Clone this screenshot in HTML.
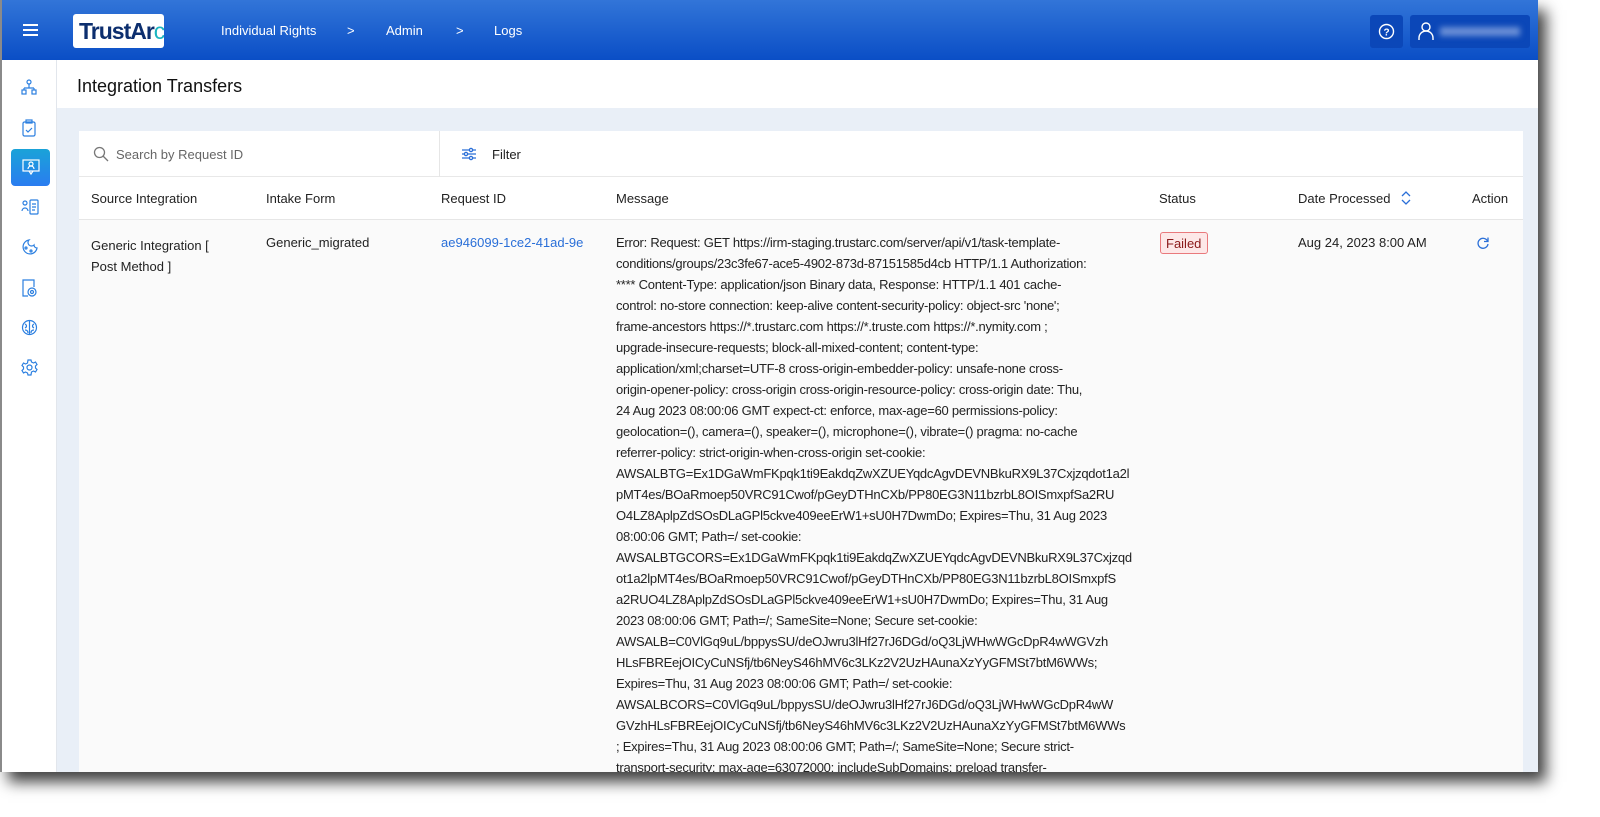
<!DOCTYPE html>
<html><head><meta charset="utf-8"><style>
*{box-sizing:border-box;margin:0;padding:0}
body{width:1600px;height:817px;background:#fff;font-family:"Liberation Sans",sans-serif;position:relative;overflow:hidden;color:#222}
.win{position:absolute;left:0;top:0;width:1538px;height:772px;background:#e9eff7;box-shadow:8px 10px 14px rgba(0,0,0,.75);overflow:hidden;border-left:2px solid #8a8a8a}
.hdr{position:absolute;left:0;top:0;width:100%;height:60px;background:linear-gradient(#3275d8,#0a4ec6);color:#fff}
.logo{position:absolute;left:71px;top:14px;width:91px;height:34px;background:#fff;border-radius:3px;font-size:23px;font-weight:bold;color:#0c2e6e;padding:4px 0 0 6px;letter-spacing:-1px;white-space:nowrap;overflow:hidden}
.logo span{color:#1bb5c0;font-weight:normal}
.crumb{position:absolute;top:23px;font-size:13px}
.side{position:absolute;left:0;top:60px;width:55px;height:712px;background:#fff;border-right:1px solid #e2e6ec}
.side svg{position:absolute;left:19px}
.title{position:absolute;left:55px;top:60px;right:0;height:48px;background:#fff;font-size:18px;padding:16px 0 0 20px;color:#111}
.card{position:absolute;left:77px;top:131px;width:1444px;height:660px;background:#fafafa}
.sr{position:absolute;left:0;top:0;width:100%;height:46px;background:#fff;border-bottom:1px solid #e8e8e8}
.th{position:absolute;left:0;top:46px;width:100%;height:43px;background:#fff;border-bottom:1px solid #e6e6e6}
.t{position:absolute;font-size:13px;white-space:nowrap}
.msg{position:absolute;left:537px;top:101px;font-size:13px;line-height:21px;white-space:nowrap;letter-spacing:-.25px;color:#222}
</style></head><body>
<div class="win">
<div class="hdr">
 <div style="position:absolute;left:21px;top:24px;width:15px;height:2px;background:#fff;box-shadow:0 5px 0 #fff,0 10px 0 #fff"></div>
 <div class="logo">TrustAr<span>c</span></div>
 <div class="crumb" style="left:219px">Individual Rights</div>
 <div class="crumb" style="left:345px">&gt;</div>
 <div class="crumb" style="left:384px">Admin</div>
 <div class="crumb" style="left:454px">&gt;</div>
 <div class="crumb" style="left:492px">Logs</div>
 <div style="position:absolute;left:1368px;top:15px;width:33px;height:33px;background:#0b47b8;border-radius:3px"><svg width="33" height="33"><circle cx="16.5" cy="16.5" r="7" fill="none" stroke="#fff" stroke-width="1.4"/><text x="16.5" y="20.5" font-size="10" font-weight="bold" fill="#fff" text-anchor="middle" font-family="Liberation Sans">?</text></svg></div>
 <div style="position:absolute;left:1408px;top:15px;width:120px;height:33px;background:#0b47b8;border-radius:3px"><svg width="33" height="33"><circle cx="16" cy="12" r="4" fill="none" stroke="#fff" stroke-width="1.4"/><path d="M9 25v-2a7 7 0 0 1 14 0v2" fill="none" stroke="#fff" stroke-width="1.4"/></svg><div style="position:absolute;left:30px;top:12px;width:80px;height:9px;background:#6a8fd6;filter:blur(3px)"></div></div>
</div>
<div class="side">
 <svg style="top:19px" width="16" height="16" fill="none" stroke="#2b7fe0" stroke-width="1.2"><circle cx="8" cy="3" r="2"/><path d="M8 5v4M3 9h10M3 9v2M13 9v2"/><rect x="1" y="11" width="4" height="4"/><rect x="11" y="11" width="4" height="4"/></svg>
 <svg style="top:59px" width="16" height="18" fill="none" stroke="#2b7fe0" stroke-width="1.2"><rect x="2" y="3" width="12" height="14" rx="1.5"/><rect x="5" y="1" width="6" height="3"/><path d="M5 11l2 2 4-4"/></svg>
 <div style="position:absolute;left:9px;top:89px;width:39px;height:37px;border-radius:4px;background:linear-gradient(#1aa3d8,#2a7cf0)"><svg style="position:absolute;left:11px;top:10px" width="18" height="17" fill="none" stroke="#fff" stroke-width="1.2"><rect x="1" y="1" width="16" height="11"/><circle cx="9" cy="5" r="2"/><path d="M6 10a3 3 0 0 1 6 0M7 12l2 3 2-3"/></svg></div>
 <svg style="top:139px" width="18" height="16" fill="none" stroke="#2b7fe0" stroke-width="1.2"><circle cx="4" cy="4" r="2"/><path d="M1 12a3 3 0 0 1 6 0"/><rect x="9" y="1" width="8" height="14" rx="1"/><path d="M11 5h4M11 8h4M11 11h3"/></svg>
 <svg style="top:179px" width="17" height="17" fill="none" stroke="#2b7fe0" stroke-width="1.2"><path d="M8 1a7 7 0 1 0 8 8 3 3 0 0 1-3-3 3 3 0 0 1-5-5z"/><circle cx="5" cy="9" r="1"/><circle cx="10" cy="12" r="1"/></svg>
 <svg style="top:219px" width="16" height="18" fill="none" stroke="#2b7fe0" stroke-width="1.2"><path d="M13 8V1H2v16h5"/><circle cx="11" cy="13" r="4"/><circle cx="11" cy="13" r="1.5"/></svg>
 <svg style="top:259px" width="17" height="17" fill="none" stroke="#2b7fe0" stroke-width="1.2"><circle cx="8.5" cy="8.5" r="7"/><path d="M8.5 2v13M4 5c2 1 2 3 0 4M13 5c-2 1-2 3 0 4M4 11c2 0 3 1 3 3M13 11c-2 0-3 1-3 3"/></svg>
 <svg style="top:299px" width="17" height="17" fill="none" stroke="#2b7fe0" stroke-width="1.2"><circle cx="8.5" cy="8.5" r="2.5"/><path d="M7 1h3l.5 2 2 1 2-1 1.5 2.5-1.5 1.5v2l1.5 1.5-1.5 2.5-2-1-2 1L10 16H7l-.5-2-2-1-2 1L1 11.5 2.5 10V8L1 6.5 2.5 4l2 1 2-1z"/></svg>
</div>
<div class="title">Integration Transfers</div>
<div class="card">
 <div class="sr">
  <svg style="position:absolute;left:14px;top:15px" width="16" height="16" fill="none" stroke="#777" stroke-width="1.3"><circle cx="6.5" cy="6.5" r="5"/><path d="M10 10l5 5"/></svg>
  <div class="t" style="left:37px;top:16px;color:#666">Search by Request ID</div>
  <div style="position:absolute;left:360px;top:0;width:1px;height:46px;background:#e6e6e6"></div>
  <svg style="position:absolute;left:382px;top:16px" width="16" height="14" fill="none" stroke="#2a6fd8" stroke-width="1.3"><path d="M1 3h14M1 7h14M1 11h14"/><circle cx="10" cy="3" r="1.6" fill="#fff"/><circle cx="5" cy="7" r="1.6" fill="#fff"/><circle cx="10" cy="11" r="1.6" fill="#fff"/></svg>
  <div class="t" style="left:413px;top:16px">Filter</div>
 </div>
 <div class="th">
  <div class="t" style="left:12px;top:14px">Source Integration</div>
  <div class="t" style="left:187px;top:14px">Intake Form</div>
  <div class="t" style="left:362px;top:14px">Request ID</div>
  <div class="t" style="left:537px;top:14px">Message</div>
  <div class="t" style="left:1080px;top:14px">Status</div>
  <div class="t" style="left:1219px;top:14px">Date Processed</div>
  <svg style="position:absolute;left:1321px;top:12px" width="12" height="18" fill="none" stroke="#2a6fd8" stroke-width="1.3"><path d="M2 7l4-4 4 4M2 11l4 4 4-4"/></svg>
  <div class="t" style="left:1393px;top:14px">Action</div>
 </div>
 <div class="t" style="left:12px;top:104px;line-height:21px">Generic Integration [<br>Post Method ]</div>
 <div class="t" style="left:187px;top:104px">Generic_migrated</div>
 <div class="t" style="left:362px;top:104px;color:#2a6fd8">ae946099-1ce2-41ad-9e</div>
 <div style="position:absolute;left:1081px;top:101px;width:48px;height:22px;border:1px solid #e9797c;background:#fde8e8;border-radius:3px;color:#8a1a1a;font-size:13px;padding:3px 0 0 5px">Failed</div>
 <div class="t" style="left:1219px;top:104px">Aug 24, 2023 8:00 AM</div>
 <svg style="position:absolute;left:1397px;top:105px" width="14" height="14" fill="none" stroke="#2a6fd8" stroke-width="1.3"><path d="M11.5 5A5 5 0 1 0 12 8"/><path d="M12 1.5v4H8"/></svg>
 <div class="msg">Error: Request: GET https://irm-staging.trustarc.com/server/api/v1/task-template-<br>conditions/groups/23c3fe67-ace5-4902-873d-87151585d4cb HTTP/1.1 Authorization:<br>**** Content-Type: application/json Binary data, Response: HTTP/1.1 401 cache-<br>control: no-store connection: keep-alive content-security-policy: object-src 'none';<br>frame-ancestors https://*.trustarc.com https://*.truste.com https://*.nymity.com ;<br>upgrade-insecure-requests; block-all-mixed-content; content-type:<br>application/xml;charset=UTF-8 cross-origin-embedder-policy: unsafe-none cross-<br>origin-opener-policy: cross-origin cross-origin-resource-policy: cross-origin date: Thu,<br>24 Aug 2023 08:00:06 GMT expect-ct: enforce, max-age=60 permissions-policy:<br>geolocation=(), camera=(), speaker=(), microphone=(), vibrate=() pragma: no-cache<br>referrer-policy: strict-origin-when-cross-origin set-cookie:<br>AWSALBTG=Ex1DGaWmFKpqk1ti9EakdqZwXZUEYqdcAgvDEVNBkuRX9L37Cxjzqdot1a2l<br>pMT4es/BOaRmoep50VRC91Cwof/pGeyDTHnCXb/PP80EG3N11bzrbL8OISmxpfSa2RU<br>O4LZ8AplpZdSOsDLaGPl5ckve409eeErW1+sU0H7DwmDo; Expires=Thu, 31 Aug 2023<br>08:00:06 GMT; Path=/ set-cookie:<br>AWSALBTGCORS=Ex1DGaWmFKpqk1ti9EakdqZwXZUEYqdcAgvDEVNBkuRX9L37Cxjzqd<br>ot1a2lpMT4es/BOaRmoep50VRC91Cwof/pGeyDTHnCXb/PP80EG3N11bzrbL8OISmxpfS<br>a2RUO4LZ8AplpZdSOsDLaGPl5ckve409eeErW1+sU0H7DwmDo; Expires=Thu, 31 Aug<br>2023 08:00:06 GMT; Path=/; SameSite=None; Secure set-cookie:<br>AWSALB=C0VlGq9uL/bppysSU/deOJwru3lHf27rJ6DGd/oQ3LjWHwWGcDpR4wWGVzh<br>HLsFBREejOICyCuNSfj/tb6NeyS46hMV6c3LKz2V2UzHAunaXzYyGFMSt7btM6WWs;<br>Expires=Thu, 31 Aug 2023 08:00:06 GMT; Path=/ set-cookie:<br>AWSALBCORS=C0VlGq9uL/bppysSU/deOJwru3lHf27rJ6DGd/oQ3LjWHwWGcDpR4wW<br>GVzhHLsFBREejOICyCuNSfj/tb6NeyS46hMV6c3LKz2V2UzHAunaXzYyGFMSt7btM6WWs<br>; Expires=Thu, 31 Aug 2023 08:00:06 GMT; Path=/; SameSite=None; Secure strict-<br>transport-security: max-age=63072000; includeSubDomains; preload transfer-</div>
</div>
</div>
</body></html>
